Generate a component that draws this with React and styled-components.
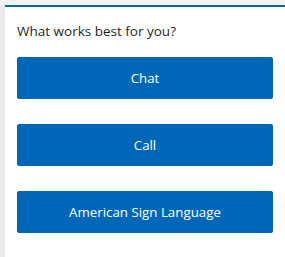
import React from "react";
import styled, { createGlobalStyle } from "styled-components";

const Global = createGlobalStyle`
  html, body { margin: 0; padding: 0; }
  body {
    background: #f3f3f3;
    font-family: "Open Sans", "Noto Sans", sans-serif;
    width: 285px;
    height: 257px;
    overflow: hidden;
  }
`;

const Frame = styled.div`
  display: flex;
  height: 257px;
  padding-top: 5px;
  box-sizing: border-box;
`;

const Shadow = styled.div`
  width: 5px;
  flex: none;
  background: #ebebeb;
`;

const Panel = styled.div`
  flex: 1;
  background: #ffffff;
  border-top: 2px solid #0067b8;
  padding: 15px 12px 0 12px;
  display: flex;
  flex-direction: column;
`;

const Question = styled.div`
  font-size: 13.5px;
  line-height: 18px;
  color: #1f1f1f;
  margin-bottom: 17px;
`;

const Options = styled.div`
  display: flex;
  flex-direction: column;
  gap: 25px;
`;

const OptionButton = styled.button`
  height: 42px;
  width: 256px;
  border: none;
  border-radius: 2px;
  background: #0067b8;
  color: #ffffff;
  font-family: "Open Sans", "Noto Sans", sans-serif;
  font-size: 13.3px;
  padding: 0;
  cursor: pointer;
`;

export default function App() {
  const options = ["Chat", "Call", "American Sign Language"];
  return (
    <>
      <Global />
      <Frame>
        <Shadow />
        <Panel>
          <Question>What works best for you?</Question>
          <Options>
            {options.map((o) => (
              <OptionButton key={o}>{o}</OptionButton>
            ))}
          </Options>
        </Panel>
      </Frame>
    </>
  );
}
